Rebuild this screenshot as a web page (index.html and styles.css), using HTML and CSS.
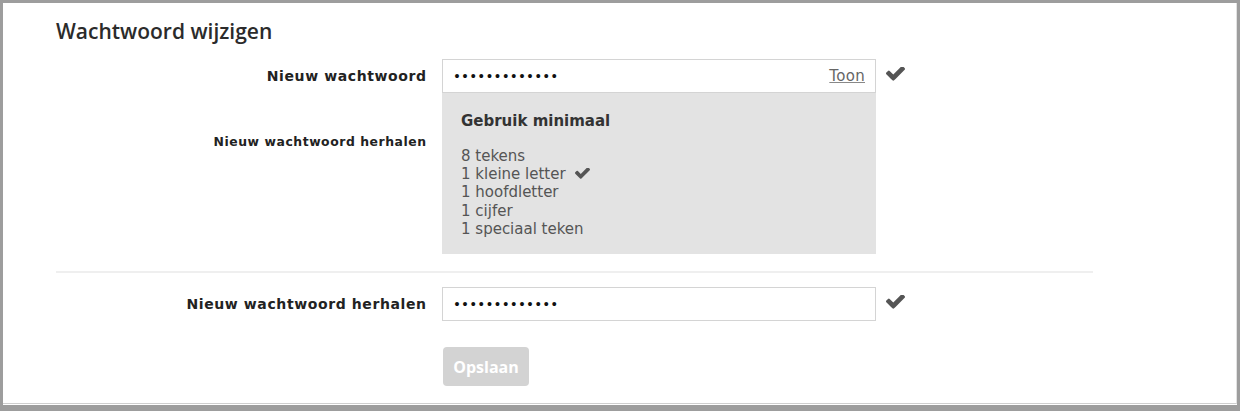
FILE: index.html
```html
<!DOCTYPE html>
<html lang="nl">
<head>
<meta charset="utf-8">
<title>Wachtwoord wijzigen</title>
<link rel="stylesheet" href="styles.css">
</head>
<body>
<div class="frame">
  <div class="panel">
    <h2 class="title">Wachtwoord wijzigen</h2>

    <div class="row row-first">
      <div class="labels">
        <label class="label">Nieuw wachtwoord</label>
        <label class="label label-hidden">Nieuw wachtwoord herhalen</label>
      </div>
      <div class="control">
        <div class="field">
          <span class="dots">•••••••••••••</span>
          <a class="toon" href="#">Toon</a>
        </div>
        <div class="hint">
          <div class="hint-title">Gebruik minimaal</div>
          <ul class="hint-list">
            <li>8 tekens</li>
            <li>1 kleine letter <svg class="check check-small" viewBox="121 430 1550 1096"><path d="M1671 566q0 40-28 68l-724 724-136 136q-28 28-68 28t-68-28l-136-136-362-362q-28-28-28-68t28-68l136-136q28-28 68-28t68 28l294 295 656-657q28-28 68-28t68 28l136 136q28 28 28 68z"/></svg></li>
            <li>1 hoofdletter</li>
            <li>1 cijfer</li>
            <li>1 speciaal teken</li>
          </ul>
        </div>
      </div>
      <svg class="check check-big" viewBox="121 430 1550 1096"><path d="M1671 566q0 40-28 68l-724 724-136 136q-28 28-68 28t-68-28l-136-136-362-362q-28-28-28-68t28-68l136-136q28-28 68-28t68 28l294 295 656-657q28-28 68-28t68 28l136 136q28 28 28 68z"/></svg>
    </div>

    <hr class="sep">

    <div class="row">
      <div class="labels">
        <label class="label">Nieuw wachtwoord herhalen</label>
      </div>
      <div class="control">
        <div class="field">
          <span class="dots">•••••••••••••</span>
        </div>
      </div>
      <svg class="check check-big" viewBox="121 430 1550 1096"><path d="M1671 566q0 40-28 68l-724 724-136 136q-28 28-68 28t-68-28l-136-136-362-362q-28-28-28-68t28-68l136-136q28-28 68-28t68 28l294 295 656-657q28-28 68-28t68 28l136 136q28 28 28 68z"/></svg>
    </div>

    <div class="row row-actions">
      <div class="labels"></div>
      <div class="control">
        <button class="btn" type="button" disabled>Opslaan</button>
      </div>
    </div>
  </div>
</div>
</body>
</html>
```
FILE: styles.css
```css
* { box-sizing: border-box; }
html, body { margin: 0; padding: 0; }
body {
  font-family: "DejaVu Sans", Verdana, sans-serif;
  color: #333;
  background: #fff;
}
.frame {
  width: 1240px;
  height: 411px;
  border: 3px solid #9d9d9d;
  border-bottom-width: 6px;
  background: #fff;
}
.panel {
  height: 401px;
  border-bottom: 1px solid #cfcfcf;
  border-right: 1px solid #e2e2e2;
  padding: 15px 0 0 53px;
}
.title {
  margin: 0 0 15px 0;
  font-family: "Open Sans", "Liberation Sans", sans-serif;
  font-weight: 600;
  font-size: 21px;
  line-height: 26px;
  color: #2b2b2b;
}
.row {
  display: flex;
  align-items: flex-start;
}
.labels {
  width: 370px;
  margin-right: 16px;
  display: flex;
  flex-direction: column;
  align-items: flex-end;
}
.label {
  font-weight: bold;
  font-size: 14px;
  letter-spacing: 0.6px;
  line-height: 34px;
  color: #222;
  margin-right: -0.6px;
}
.label-hidden {
  font-size: 12.4px;
  letter-spacing: 0.55px;
  line-height: 20px;
  margin-top: 39px;
}
.control {
  width: 434px;
}
.field {
  height: 34px;
  border: 1px solid #d4d4d4;
  background: #fff;
  display: flex;
  align-items: center;
  justify-content: space-between;
  padding: 0 10px 0 10px;
}
.dots {
  font-size: 13.5px;
  letter-spacing: 0.15px;
  color: #111;
  line-height: 1;
  padding-top: 2px;
}
.toon {
  font-size: 15px;
  letter-spacing: 0.3px;
  color: #666;
  text-decoration: underline;
  text-decoration-color: #888;
}
.hint {
  height: 161px;
  background: #e3e3e3;
  padding: 18px 19px 0 19px;
}
.hint-title {
  font-weight: bold;
  font-size: 15px;
  line-height: 20px;
  color: #333;
}
.hint-list {
  list-style: none;
  margin: 16px 0 0 0;
  padding: 0;
  font-size: 15px;
  line-height: 18.2px;
  color: #555;
}
.hint-list li {
  display: flex;
  align-items: center;
}
.check {
  fill: #555;
  flex: none;
}
.check-big {
  width: 19px;
  height: 14px;
  margin: 8px 0 0 10px;
}
.check-small {
  width: 15px;
  height: 11px;
  margin-left: 9px;
  margin-top: -2px;
}
.sep {
  width: 1037px;
  margin: 17px 0 14px 0;
  border: 0;
  border-top: 2px solid #efefef;
  height: 0;
}
.row-actions {
  margin-top: 26px;
}
.btn {
  width: 86px;
  height: 39px;
  margin-left: 1px;
  border: 0;
  border-radius: 4px;
  background: #d3d3d3;
  color: #fff;
  font-family: "Open Sans", "Liberation Sans", sans-serif;
  font-weight: 700;
  font-size: 16px;
  padding: 0;
}
```
